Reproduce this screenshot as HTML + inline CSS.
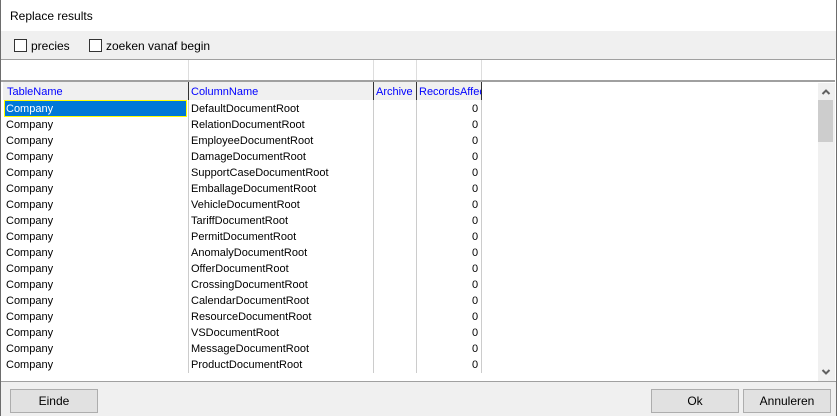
<!DOCTYPE html><html><head><style>
body{margin:0;width:837px;height:417px;position:relative;overflow:hidden;font-family:"Liberation Sans",sans-serif;font-size:11px;background:#fff;color:#000}
.a{position:absolute}
.row{position:absolute;left:3px;height:16px;line-height:16px;width:478px}
.row span{position:absolute}
.btn{position:absolute;height:22px;border:1px solid #adadad;background:#e1e1e1;text-align:center;line-height:22px;font-size:12px}
</style></head><body>
<div class="a" style="left:0;top:0;width:835px;height:415px;border:1px solid #6d6d6d;border-top:none"></div>
<div class="a" style="left:10px;top:9px;font-size:12px">Replace results</div>
<div class="a" style="left:1px;top:31px;width:835px;height:28px;background:#f0f0f0"></div>
<div class="a" style="left:14px;top:39px;width:11px;height:11px;border:1px solid #333;background:#fff"></div>
<div class="a" style="left:31px;top:39px;font-size:12px">precies</div>
<div class="a" style="left:89px;top:39px;width:11px;height:11px;border:1px solid #333;background:#fff"></div>
<div class="a" style="left:106px;top:39px;font-size:12px">zoeken vanaf begin</div>
<div class="a" style="left:1px;top:59px;width:834px;height:1px;background:#a0a0a0"></div>
<div class="a" style="left:188px;top:60px;width:1px;height:20px;background:#ddd"></div>
<div class="a" style="left:373px;top:60px;width:1px;height:20px;background:#ddd"></div>
<div class="a" style="left:416px;top:60px;width:1px;height:20px;background:#ddd"></div>
<div class="a" style="left:481px;top:60px;width:1px;height:20px;background:#ddd"></div>
<div class="a" style="left:1px;top:80px;width:834px;height:2px;background:#a0a0a0"></div>
<div class="a" style="left:3px;top:82px;width:479px;height:18px;background:#f0f0f0"></div>
<div class="a" style="left:188px;top:82px;width:1px;height:18px;background:#333"></div>
<div class="a" style="left:373px;top:82px;width:1px;height:18px;background:#333"></div>
<div class="a" style="left:416px;top:82px;width:1px;height:18px;background:#333"></div>
<div class="a" style="left:481px;top:82px;width:1px;height:18px;background:#333"></div>
<div class="a" style="left:7px;top:86px;color:#0000ff">TableName</div>
<div class="a" style="left:191px;top:86px;color:#0000ff">ColumnName</div>
<div class="a" style="left:376px;top:86px;color:#0000ff">Archive</div>
<div class="a" style="left:419px;top:86px;color:#0000ff;width:62px;overflow:hidden;white-space:nowrap">RecordsAffected</div>
<div class="a" style="left:188px;top:100px;width:1px;height:273px;background:#ccc"></div>
<div class="a" style="left:373px;top:100px;width:1px;height:273px;background:#ccc"></div>
<div class="a" style="left:416px;top:100px;width:1px;height:273px;background:#ccc"></div>
<div class="a" style="left:481px;top:100px;width:1px;height:273px;background:#ccc"></div>
<div class="a" style="left:4px;top:100px;width:181px;height:15px;background:#0078d7;border:1px solid #ff0"></div>
<div id="rows"></div>
<script>
var c=["DefaultDocumentRoot","RelationDocumentRoot","EmployeeDocumentRoot","DamageDocumentRoot","SupportCaseDocumentRoot","EmballageDocumentRoot","VehicleDocumentRoot","TariffDocumentRoot","PermitDocumentRoot","AnomalyDocumentRoot","OfferDocumentRoot","CrossingDocumentRoot","CalendarDocumentRoot","ResourceDocumentRoot","VSDocumentRoot","MessageDocumentRoot","ProductDocumentRoot"];
var h="";c.forEach(function(n,i){h+='<div class="row" style="top:'+(101+i*16)+'px"><span style="left:3px;'+(i==0?'color:#fff':'')+'">Company</span><span style="left:188px">'+n+'</span><span style="left:469px">0</span></div>'});
document.getElementById("rows").innerHTML=h;
</script>
<div class="a" style="left:818px;top:83px;width:17px;height:298px;background:#f0f0f0"></div>
<div class="a" style="left:818px;top:100px;width:15px;height:42px;background:#cdcdcd"></div>
<svg class="a" style="left:818px;top:83px" width="16" height="17"><path d="M4.5 11 L8 7.5 L11.5 11" stroke="#606060" stroke-width="2" fill="none"/></svg>
<svg class="a" style="left:818px;top:364px" width="16" height="17"><path d="M4.5 6 L8 9.5 L11.5 6" stroke="#606060" stroke-width="2" fill="none"/></svg>
<div class="a" style="left:1px;top:381px;width:835px;height:1px;background:#a0a0a0"></div>
<div class="a" style="left:1px;top:382px;width:835px;height:34px;background:#f0f0f0"></div>
<div class="btn" style="left:10px;top:389px;width:86px">Einde</div>
<div class="btn" style="left:651px;top:389px;width:86px">Ok</div>
<div class="btn" style="left:743px;top:389px;width:86px">Annuleren</div>
</body></html>
